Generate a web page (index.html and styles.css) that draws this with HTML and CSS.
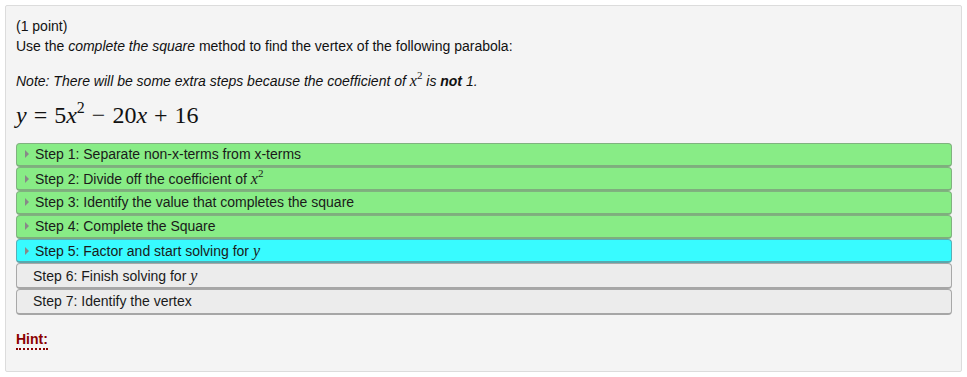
FILE: index.html
```html
<!DOCTYPE html>
<html>
<head>
<meta charset="utf-8">
<link rel="stylesheet" href="styles.css">
</head>
<body>
<div class="page">
  <div class="problem">
    <div class="intro">
      <div>(1 point)</div>
      <div>Use the <i>complete the square</i> method to find the vertex of the following parabola:</div>
    </div>
    <div class="note"><i>Note: There will be some extra steps because the coefficient of <span class="m">x</span><sup class="msup">2</sup> is <b>not</b> 1.</i></div>
    <div class="eq"><span class="mi">y</span> = 5<span class="mi">x</span><sup>2</sup> − 20<span class="mi">x</span> + 16</div>
    <div class="steps">
      <div class="step green"><span class="tri"></span>Step 1: Separate non-x-terms from x-terms</div>
      <div class="step green"><span class="tri"></span>Step 2: Divide off the coefficient of <span class="m">x</span><sup class="msup">2</sup></div>
      <div class="step green"><span class="tri"></span>Step 3: Identify the value that completes the square</div>
      <div class="step green"><span class="tri"></span>Step 4: Complete the Square</div>
      <div class="step cyan"><span class="tri"></span>Step 5: Factor and start solving for <span class="m">y</span></div>
      <div class="step gray">Step 6: Finish solving for <span class="m">y</span></div>
      <div class="step gray">Step 7: Identify the vertex</div>
    </div>
    <div class="hint"><span>Hint:</span></div>
  </div>
</div>
</body>
</html>
```
FILE: styles.css
```css
html, body { margin: 0; padding: 0; background: #fff; }
.page { padding: 5px 5px 4px 5px; }
.problem {
  background: #f4f4f4;
  border: 1px solid #dcdcdc;
  border-radius: 2px;
  padding: 10px 9px 20px 10px;
  font-family: "Liberation Sans", Arial, sans-serif;
  font-size: 14px;
  color: #111;
  box-sizing: border-box;
  height: 367px;
}
.intro { line-height: 20px; }
.note { margin-top: 15px; line-height: 20px; }
.m { font-family: "Liberation Serif", "Times New Roman", serif; font-style: italic; font-size: 16px; }
sup.msup { font-family: "Liberation Serif", serif; font-style: normal; font-size: 11px; vertical-align: 7px; line-height: 0; }
.eq {
  margin-top: 9px;
  font-family: "Liberation Serif", "Times New Roman", serif;
  font-size: 24px;
  line-height: 30px;
  color: #111;
  word-spacing: 1px;
}
.eq .mi { font-style: italic; }
.eq sup { font-size: 16px; vertical-align: 10px; line-height: 0; }
.steps { margin-top: 13px; }
.step {
  box-sizing: border-box;
  height: 24px;
  line-height: 21px;
  border-radius: 4px;
  padding-left: 8px;
  color: #1a1a1a;
  white-space: nowrap;
}
.step.green { background: #88ec86; border: 1px solid #80b27f; border-bottom: 2px solid #7fae7e; }
.step.cyan { background: #38fbff; border: 1px solid #56b0b8; border-bottom: 2px solid #5aa7ad; }
.step.gray { background: #ececec; border: 1px solid #a8a8a8; border-bottom: 2px solid #a6a6a6; height: 26px; line-height: 23px; padding-left: 16px; }
.tri {
  display: inline-block;
  width: 0; height: 0;
  border-top: 4px solid transparent;
  border-bottom: 4px solid transparent;
  border-left: 4px solid #888;
  margin-right: 6px;
  vertical-align: 1px;
}
.hint { margin-top: 16px; }
.hint span {
  color: #8b0000;
  font-weight: bold;
  border-bottom: 2px dotted #8b0000;
  padding-bottom: 1px;
}
```
